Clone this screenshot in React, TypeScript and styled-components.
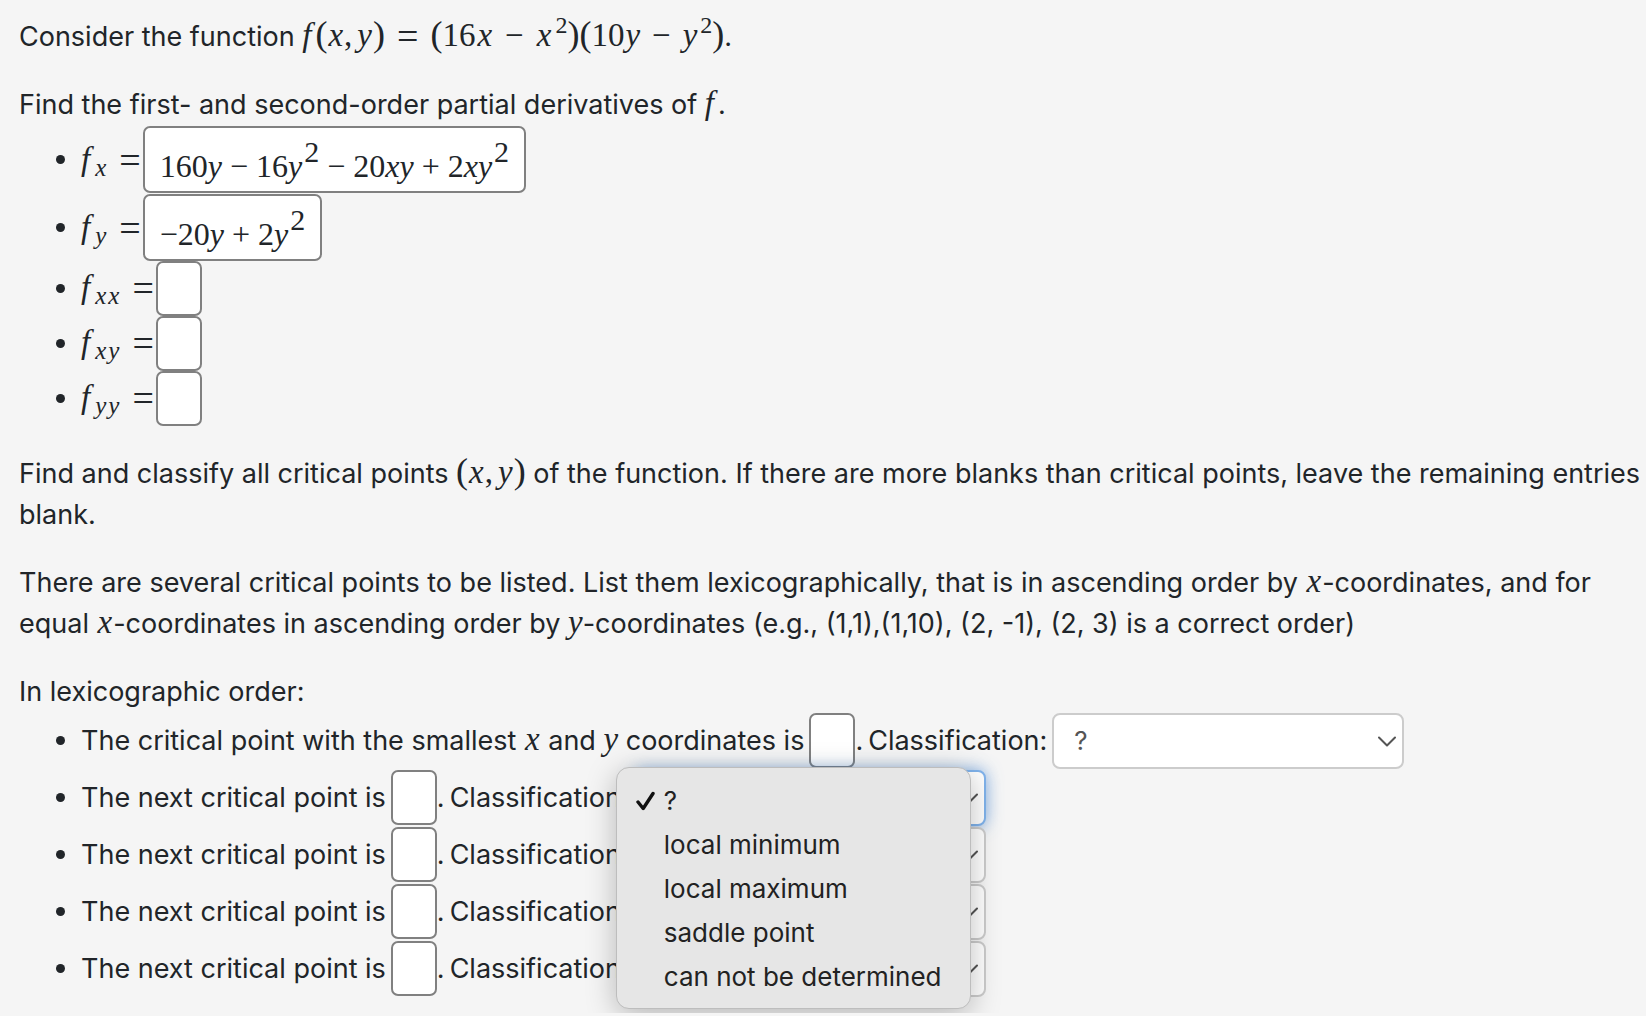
import React, { useId } from "react";
import styled, { createGlobalStyle } from "styled-components";

const GlobalStyle = createGlobalStyle`
  *, *::before, *::after { box-sizing: border-box; }
  body {
    margin: 0;
    background: #f5f5f5;
    color: #212529;
    font-family: Inter, "Liberation Sans", sans-serif;
    font-size: 27px;
    line-height: 41px;
  }
`;

const Page = styled.main`
  padding: 16px 4px 16px 19px;
`;

const Paragraph = styled.p<{ $tight?: boolean }>`
  margin: 0 0 ${(p) => (p.$tight ? 0 : 27)}px;
`;

const Maths = styled.span<{ $size?: number }>`
  font-family: "Liberation Serif", "Times New Roman", serif;
  font-size: ${(p) => p.$size ?? 33}px;
  line-height: 1;
  white-space: nowrap;
`;

const Var = styled.i<{ $gap?: number }>`
  font-style: italic;
  margin: 0 ${(p) => p.$gap ?? 1}px;
`;

const Fn = styled.i`
  font-style: italic;
  margin: 0 4px 0 0;
`;

const Op = styled.span<{ $gap?: number }>`
  margin: 0 ${(p) => p.$gap ?? 11}px;
`;

const Equals = styled.span<{ $after?: number }>`
  font-size: 38px;
  line-height: 0;
  vertical-align: -3px;
  margin: 0 ${(p) => p.$after ?? 12}px 0 12px;
`;

const Paren = styled.span`
  font-size: 36px;
  line-height: 0;
`;

const Comma = styled.span`
  margin-right: 4px;
`;

const Sup = styled.sup<{ $large?: boolean }>`
  font-size: ${(p) => (p.$large ? 30 : 24)}px;
  line-height: 0;
  vertical-align: ${(p) => (p.$large ? 15 : 13)}px;
  margin-left: 2px;
`;

const Sub = styled.sub`
  font-size: 25px;
  line-height: 0;
  vertical-align: -6px;
`;

const List = styled.ul<{ $after?: number }>`
  list-style: none;
  margin: 0 0 ${(p) => p.$after ?? 0}px;
  padding: 0 0 0 37px;
`;

const Item = styled.li<{ $height: number; $gap: number }>`
  display: flex;
  align-items: center;
  gap: ${(p) => p.$gap}px;
  height: ${(p) => p.$height}px;
  white-space: nowrap;

  &::before {
    content: "";
    flex: none;
    width: 9px;
    height: 9px;
    margin-right: ${(p) => 16 - p.$gap}px;
    border-radius: 50%;
    background: #212529;
  }
`;

const Answer = styled.span`
  display: flex;
  align-items: center;
`;

const Blank = styled.input`
  flex: none;
  width: 46px;
  height: 55px;
  padding: 0 8px;
  border: 2px solid #808080;
  border-radius: 7px;
  background: #fff;
  color: inherit;
  font: inherit;
  outline: none;
`;

const FilledAnswer = styled.span`
  display: flex;
  align-items: center;
  height: 67px;
  padding: 14px 15px 0;
  border: 2px solid #808080;
  border-radius: 7px;
  background: #fff;
  outline: none;
`;

const SelectFrame = styled.span`
  position: relative;
  display: flex;
  flex: none;
  width: 352px;
`;

const Select = styled.select<{ $focused?: boolean }>`
  appearance: none;
  width: 100%;
  height: 56px;
  padding: 0 44px 0 20px;
  border: 2px solid ${(p) => (p.$focused ? "#80b3ec" : "#cccccc")};
  border-radius: 8px;
  background: #fff;
  box-shadow: ${(p) => (p.$focused ? "0 0 16px rgba(82, 148, 226, 0.7)" : "none")};
  color: #555;
  font: inherit;
  font-size: 26px;
  outline: none;
`;

const Chevron = styled.svg`
  position: absolute;
  right: 8px;
  top: 23px;
  width: 18px;
  height: 12px;
  pointer-events: none;
`;

const Menu = styled.ul`
  position: absolute;
  z-index: 2;
  left: -18px;
  top: -3px;
  width: 355px;
  margin: 0;
  padding: 11px 0 9px;
  list-style: none;
  border: 1px solid #bdbdbd;
  border-radius: 13px;
  background: #e6e6e6;
  box-shadow: 0 6px 30px rgba(0, 0, 0, 0.26);
  color: #222;
  font-size: 26px;
  line-height: 44px;
`;

const MenuItem = styled.li`
  display: grid;
  grid-template-columns: 28px 1fr;
  align-items: center;
  padding-left: 19px;
`;

const CLASSES = ["?", "local minimum", "local maximum", "saddle point", "can not be determined"];

function Blanked({ name, after, children }: { name: string; after?: string; children: React.ReactNode }) {
  const id = useId();
  return (
    <>
      <label htmlFor={id}>{children}</label>
      <Answer>
        <Blank id={id} name={name} type="text" />
        {after}
      </Answer>
    </>
  );
}

function Classification({ name, open }: { name: string; open?: boolean }) {
  const id = useId();
  return (
    <>
      <label htmlFor={id}>Classification:</label>
      <SelectFrame>
        <Select id={id} name={name} $focused={open} defaultValue="?">
          {CLASSES.map((c) => (
            <option key={c}>{c}</option>
          ))}
        </Select>
        <Chevron viewBox="0 0 18 12" fill="none" stroke="#555" strokeWidth="2" aria-hidden="true">
          <path d="M1 1.5 9 9.5l8-8" strokeLinecap="round" strokeLinejoin="round" />
        </Chevron>
        {open && (
          <Menu role="listbox" aria-label="Classification">
            {CLASSES.map((c, i) => (
              <MenuItem key={c} role="option" aria-selected={i === 0}>
                {i === 0 ? (
                  <svg width="19" height="20" viewBox="0 0 19 20" fill="none" stroke="#111" strokeWidth="3.4" aria-hidden="true">
                    <path d="M2 11 7.2 17.5 17 2.5" strokeLinecap="round" strokeLinejoin="round" />
                  </svg>
                ) : (
                  <span />
                )}
                {c}
              </MenuItem>
            ))}
          </Menu>
        )}
      </SelectFrame>
    </>
  );
}

const X = () => <Maths><Var>x</Var></Maths>;
const Y = () => <Maths><Var $gap={0}>y</Var></Maths>;

const Pair = () => (
  <>
    <Paren>(</Paren><Var>x</Var><Comma>,</Comma><Var>y</Var><Paren>)</Paren>
  </>
);

function Partial({ by }: { by: string }) {
  return (
    <Maths>
      <Fn>f</Fn>
      <Sub>
        {by.split("").map((v, i) => (
          <Var key={i}>{v}</Var>
        ))}
      </Sub>
      <Equals $after={2}>=</Equals>
    </Maths>
  );
}

export default function App() {
  return (
    <>
      <GlobalStyle />
      <Page>
        <Paragraph>
          Consider the function{" "}
          <Maths>
            <Fn>f</Fn><Pair /><Equals>=</Equals>
            <Paren>(</Paren>16<Var $gap={2}>x</Var><Op>−</Op><Var $gap={2}>x</Var><Sup>2</Sup><Paren>)</Paren>
            <Paren>(</Paren>10<Var>y</Var><Op>−</Op><Var>y</Var><Sup>2</Sup><Paren>)</Paren>
          </Maths>
          .
        </Paragraph>
        <Paragraph $tight>
          Find the first- and second-order partial derivatives of <Maths><Fn>f</Fn></Maths>.
        </Paragraph>

        <List $after={27}>
          <Item $height={68} $gap={0}>
            <Partial by="x" />
            <FilledAnswer role="textbox" aria-label="f x" contentEditable suppressContentEditableWarning>
              <Maths $size={32}>
                160<Var $gap={0}>y</Var><Op $gap={8}>−</Op>16<Var $gap={0}>y</Var><Sup $large>2</Sup>
                <Op $gap={8}>−</Op>20<Var $gap={0}>xy</Var><Op $gap={8}>+</Op>2<Var $gap={0}>xy</Var><Sup $large>2</Sup>
              </Maths>
            </FilledAnswer>
          </Item>
          <Item $height={68} $gap={0}>
            <Partial by="y" />
            <FilledAnswer role="textbox" aria-label="f y" contentEditable suppressContentEditableWarning>
              <Maths $size={32}>
                −20<Var $gap={0}>y</Var><Op $gap={8}>+</Op>2<Var $gap={0}>y</Var><Sup $large>2</Sup>
              </Maths>
            </FilledAnswer>
          </Item>
          {["xx", "xy", "yy"].map((by) => (
            <Item key={by} $height={55} $gap={0}>
              <Blanked name={`f${by}`}><Partial by={by} /></Blanked>
            </Item>
          ))}
        </List>

        <Paragraph>
          Find and classify all critical points <Maths><Pair /></Maths> of the function. If there are
          more blanks than critical points, leave the remaining entries blank.
        </Paragraph>
        <Paragraph>
          There are several critical points to be listed. List them lexicographically, that is in
          ascending order by <X />-coordinates, and for equal <X />-coordinates in ascending order by{" "}
          <Y />-coordinates (e.g., (1,1),(1,10), (2, -1), (2, 3) is a correct order)
        </Paragraph>
        <Paragraph $tight>In lexicographic order:</Paragraph>

        <List>
          <Item $height={57} $gap={5}>
            <Blanked name="point1" after=".">
              The critical point with the smallest <X /> and <Y /> coordinates is
            </Blanked>
            <Classification name="class1" />
          </Item>
          {[2, 3, 4, 5].map((n) => (
            <Item key={n} $height={57} $gap={5}>
              <Blanked name={`point${n}`} after=".">The next critical point is</Blanked>
              <Classification name={`class${n}`} open={n === 2} />
            </Item>
          ))}
        </List>
      </Page>
    </>
  );
}
